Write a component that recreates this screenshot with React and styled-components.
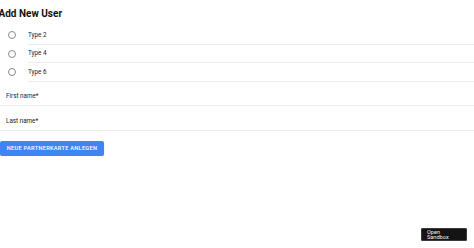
import React from "react";
import styled, { createGlobalStyle } from "styled-components";

const Global = createGlobalStyle`
  html, body { margin: 0; padding: 0; background: #fff; }
  body { font-family: Roboto, "Liberation Sans", sans-serif; color: #1a1a1a; }
`;

const Page = styled.div`
  display: flex;
  flex-direction: column;
  width: 474px;
`;

const Title = styled.h1`
  margin: 0 0 0 -1.5px;
  height: 26px;
  display: flex;
  align-items: center;
  font-size: 10px;
  font-weight: 700;
  color: #111;
`;

const RadioList = styled.div`
  display: flex;
  flex-direction: column;
`;

const RadioRow = styled.label`
  display: flex;
  align-items: stretch;
  height: 18.5px;
`;

const RadioCell = styled.span`
  width: 28px;
  display: flex;
  align-items: center;
  justify-content: center;
  box-sizing: border-box;
  padding-right: 4px;
`;

const RadioCircle = styled.span`
  width: 6px;
  height: 6px;
  border: 1px solid #8a8a8a;
  border-radius: 50%;
`;

const RadioLabel = styled.span`
  flex: 1;
  display: flex;
  align-items: center;
  font-size: 6.3px;
  color: #222;
  border-bottom: 1px solid #ececec;
`;

const Field = styled.div`
  height: 24.5px;
  display: flex;
  align-items: center;
  padding: 5.5px 0 0 6px;
  box-sizing: border-box;
  font-size: 6.3px;
  color: #222;
  border-bottom: 1px solid #ececec;
`;

const Actions = styled.div`
  padding-top: 10px;
  display: flex;
`;

const Button = styled.button`
  width: 104px;
  height: 15px;
  border: none;
  border-radius: 2px;
  background: #3f84f4;
  color: #fff;
  font-family: Roboto, "Liberation Sans", sans-serif;
  font-size: 5.6px;
  font-weight: 500;
  letter-spacing: 0.3px;
  text-transform: uppercase;
  padding: 0;
  display: flex;
  align-items: center;
  justify-content: center;
  box-shadow: 0 1px 2px rgba(0,0,0,0.15);
`;

const Badge = styled.div`
  position: fixed;
  right: 7px;
  bottom: 7px;
  width: 46px;
  height: 13px;
  box-sizing: border-box;
  background: #141414;
  border: 1px solid #3a3a3a;
  border-radius: 1px;
  color: #f2f2f2;
  font-size: 5.6px;
  line-height: 5.8px;
  padding: 0.5px 0 0 5px;
`;

const types = ["Type 2", "Type 4", "Type 6"];

export default function App() {
  return (
    <Page>
      <Global />
      <Title>Add New User</Title>
      <RadioList>
        {types.map((t) => (
          <RadioRow key={t}>
            <RadioCell>
              <RadioCircle />
            </RadioCell>
            <RadioLabel>{t}</RadioLabel>
          </RadioRow>
        ))}
      </RadioList>
      <Field>First name*</Field>
      <Field>Last name*</Field>
      <Actions>
        <Button>Neue Partnerkarte anlegen</Button>
      </Actions>
      <Badge>
        Open
        <br />
        Sandbox
      </Badge>
    </Page>
  );
}
